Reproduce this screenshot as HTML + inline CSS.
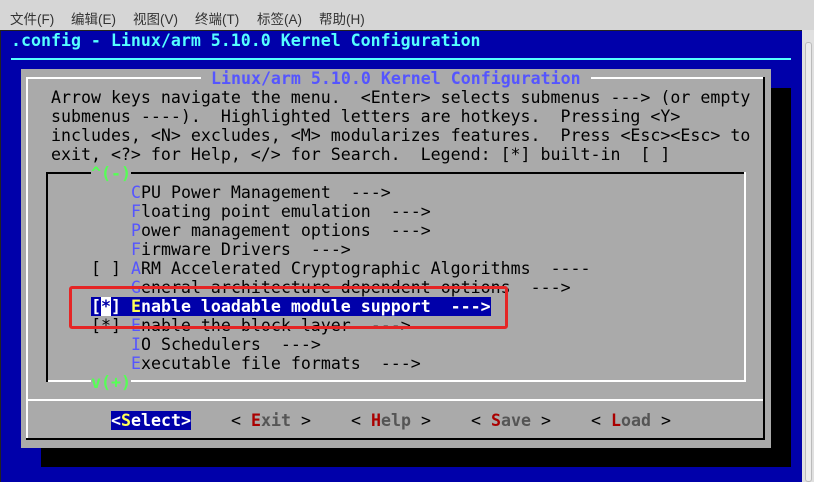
<!DOCTYPE html>
<html><head><meta charset="utf-8"><style>
*{margin:0;padding:0;box-sizing:border-box}
body{width:814px;height:482px;overflow:hidden;background:#d6d6d6;position:relative;font-family:"DejaVu Sans Mono","Liberation Mono",monospace;font-size:16.6px}
.a{position:absolute}
.t{position:absolute;white-space:pre;line-height:19px;height:19px}
.menu{font-family:"Liberation Sans","Noto Sans CJK SC",sans-serif;font-size:13.5px;color:#333;top:8px}
.b{color:#5555ff}
.k{color:#000}
.g{color:#55ff55;font-weight:bold}
.r{color:#aa0000}
.d{color:#555}
</style></head><body>
<div class="a menu" style="left:10px">文件(F)</div>
<div class="a menu" style="left:71px">编辑(E)</div>
<div class="a menu" style="left:133px">视图(V)</div>
<div class="a menu" style="left:195px">终端(T)</div>
<div class="a menu" style="left:257px">标签(A)</div>
<div class="a menu" style="left:319px">帮助(H)</div>
<!-- terminal -->
<div class="a" style="left:0;top:30px;width:802px;height:452px;background:#0000aa;border-top:1px solid #222;border-left:1px solid #222"></div>
<div class="a" style="left:802px;top:30px;width:12px;height:452px;background:#e0e0e0"></div>
<div class="a" style="left:805px;top:42px;width:7px;height:440px;border:1px solid #bbb;border-radius:3px;background:#ececec"></div>
<div class="t" style="left:11px;top:31px;color:#55ffff;font-weight:bold">.config - Linux/arm 5.10.0 Kernel Configuration</div>
<div class="a" style="left:11px;top:58px;width:780px;height:2px;background:#55ffff"></div>
<!-- shadow -->
<div class="a" style="left:41px;top:88px;width:750px;height:379px;background:#000"></div>
<!-- dialog -->
<div class="a" style="left:21px;top:69px;width:750px;height:379px;background:#aaaaaa"></div>
<div class="a" style="left:26px;top:77px;width:739px;height:2px;background:#fff"></div>
<div class="a" style="left:26px;top:77px;width:2px;height:363px;background:#fff"></div>
<div class="a" style="left:763px;top:77px;width:2px;height:363px;background:#000"></div>
<div class="a" style="left:26px;top:438px;width:739px;height:2px;background:#000"></div>
<div class="a" style="left:28px;top:399px;width:735px;height:2px;background:#fff"></div>
<div class="t" style="left:201px;top:69px;background:#aaaaaa;color:#5555ff;font-weight:bold"> Linux/arm 5.10.0 Kernel Configuration </div>
<div class="t" style="left:51px;top:88px">Arrow keys navigate the menu.  &lt;Enter&gt; selects submenus ---&gt; (or empty</div>
<div class="t" style="left:51px;top:107px">submenus ----).  Highlighted letters are hotkeys.  Pressing &lt;Y&gt;</div>
<div class="t" style="left:51px;top:126px">includes, &lt;N&gt; excludes, &lt;M&gt; modularizes features.  Press &lt;Esc&gt;&lt;Esc&gt; to</div>
<div class="t" style="left:51px;top:145px">exit, &lt;?&gt; for Help, &lt;/&gt; for Search.  Legend: [*] built-in  [ ]</div>
<!-- menu box -->
<div class="a" style="left:46px;top:172px;width:700px;height:2px;background:#000"></div>
<div class="a" style="left:46px;top:172px;width:2px;height:210px;background:#000"></div>
<div class="a" style="left:744px;top:172px;width:2px;height:210px;background:#fff"></div>
<div class="a" style="left:48px;top:380px;width:698px;height:2px;background:#fff"></div>
<div class="t g" style="left:91px;top:164px;background:#aaaaaa">^(-)</div>
<div class="t g" style="left:91px;top:373px;background:#aaaaaa">v(+)</div>
<div class="t" style="left:131px;top:183px"><span class="b">C</span>PU Power Management  ---&gt;</div>
<div class="t" style="left:131px;top:202px"><span class="b">F</span>loating point emulation  ---&gt;</div>
<div class="t" style="left:131px;top:221px"><span class="b">P</span>ower management options  ---&gt;</div>
<div class="t" style="left:131px;top:240px"><span class="b">F</span>irmware Drivers  ---&gt;</div>
<div class="t" style="left:91px;top:259px">[ ] <span class="b">A</span>RM Accelerated Cryptographic Algorithms  ----</div>
<div class="t" style="left:131px;top:278px"><span class="b">G</span>eneral architecture-dependent options  ---&gt;</div>
<div class="t" style="left:91px;top:297px;background:#0000aa;color:#fff;font-weight:bold">[<span style="background:#fff;color:#0000aa">*</span>] <span style="color:#ffff55">E</span>nable loadable module support  ---&gt;</div>
<div class="t" style="left:91px;top:316px">[*] <span class="b">E</span>nable the block layer  ---&gt;</div>
<div class="t" style="left:131px;top:335px"><span class="b">I</span>O Schedulers  ---&gt;</div>
<div class="t" style="left:131px;top:354px"><span class="b">E</span>xecutable file formats  ---&gt;</div>
<!-- buttons -->
<div class="t" style="left:111px;top:411px;background:#0000aa;color:#fff;font-weight:bold">&lt;<span style="color:#ffff55">S</span>elect&gt;</div>
<div class="t" style="left:231px;top:411px">&lt; <b class="r">E</b><b class="d">xit</b> &gt;</div>
<div class="t" style="left:351px;top:411px">&lt; <b class="r">H</b><b class="d">elp</b> &gt;</div>
<div class="t" style="left:471px;top:411px">&lt; <b class="r">S</b><b class="d">ave</b> &gt;</div>
<div class="t" style="left:591px;top:411px">&lt; <b class="r">L</b><b class="d">oad</b> &gt;</div>
<!-- red annotation -->
<div class="a" style="left:69px;top:286px;width:439px;height:43px;border:3px solid #e52525;border-radius:3px"></div>
</body></html>
